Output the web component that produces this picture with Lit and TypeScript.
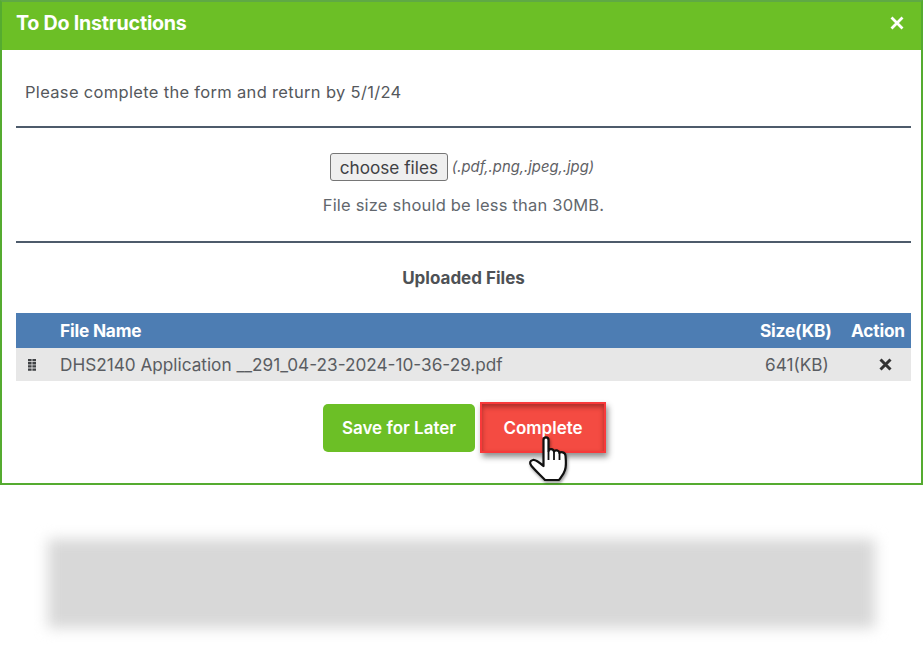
import { LitElement, html, css } from "lit";
import { customElement } from "lit/decorators.js";

@customElement("app-root")
export class AppRoot extends LitElement {
  static styles = css`
    :host { display: block; width: 923px; height: 654px; background: #fff; font-family: Inter, "Open Sans", sans-serif; color: #56595e; overflow: hidden; }
    .modal { height: 485px; box-sizing: border-box; border: 2px solid #55ab30; border-top-color: #5fa945; display: flex; flex-direction: column; background: #fff; }
    .head { height: 48px; flex: none; background: #6cbf26; display: flex; align-items: center; justify-content: space-between; padding: 0 17px 7px 14px; color: #fff; font-weight: 700; font-size: 19.7px; letter-spacing: -0.25px; box-sizing: border-box; }
    .head svg { display: block; }
    .body { flex: 1; padding: 0 10px 0 14px; display: flex; flex-direction: column; }
    .msg { height: 76px; box-sizing: border-box; padding: 32px 0 0 9px; font-size: 16.5px; line-height: 20px; letter-spacing: .32px; color: #55585c; }
    .rule { height: 1.5px; background: #4d5b6b; flex: none; }
    .upload { height: 113.5px; display: flex; flex-direction: column; align-items: center; box-sizing: border-box; padding-top: 25px; }
    .chooser { display: flex; align-items: center; gap: 4px; height: 28px; padding-right: 3px; }
    .btn-file { width: 118px; height: 28px; box-sizing: border-box; border: 1px solid #767676; border-radius: 3px; background: #efefef; font: 17.2px/1 Inter, sans-serif; color: #3f4144; padding: 2px 0 0; }
    .types { font-size: 14.8px; font-style: italic; color: #5f6266; }
    .limit { margin-top: 14px; font-size: 16.5px; line-height: 20px; letter-spacing: .2px; color: #62676d; }
    .title { height: 70px; display: flex; align-items: center; justify-content: center; font-weight: 700; font-size: 17px; color: #4e5155; }
    table { border-collapse: collapse; width: 100%; table-layout: fixed; }
    th { background: #4d7db3; color: #fff; height: 35px; padding: 0; font-size: 17.3px; font-weight: 700; text-align: left; letter-spacing: -0.2px; }
    td { background: #e7e7e7; height: 33px; padding: 1px 0 0; box-sizing: border-box; font-size: 17.2px; color: #5a5d62; }
    .c0 { width: 44px; } .c2 { width: 91px; } .c3 { width: 60px; }
    .size { padding-left: 5px; }
    .grip { display: block; margin-left: 12px; }
    .x { display: block; margin: 0 auto; position: relative; left: 4px; }
    .actions { display: flex; justify-content: center; gap: 5px; margin-top: 21px; padding-left: 2px; }
    .btn { height: 48px; border: 0; border-radius: 5px; color: #fff; font: 600 17px Inter, sans-serif; box-sizing: border-box; padding: 1px 0 0; }
    .save { width: 152px; background: #6cbf26; margin-top: 2px; }
    .done { position: relative; width: 126px; height: 51px; background: #f44b42; border: 2px solid #f8393a; border-radius: 0; box-shadow: 2px 4px 6px rgba(0,0,0,.45), inset 0 3px 5px rgba(110,20,20,.55); padding-top: 2px; }
    .hand { position: absolute; left: 38px; top: 26px; }
    .blur-wrap { padding: 54px 48px 0 48px; }
    .blur { height: 89px; background: #d8d8d8; filter: blur(7px); }
  `;

  render() {
    return html`
      <div class="modal">
        <div class="head">
          <span>To Do Instructions</span>
          <svg width="14" height="14" viewBox="0 0 14 14"><path d="M1.500 1.500l11 11M12.500 1.500l-11 11" stroke="#fff" stroke-width="2.800"/></svg>
        </div>
        <div class="body">
          <div class="msg">Please complete the form and return by 5/1/24</div>
          <div class="rule"></div>
          <div class="upload">
            <div class="chooser">
              <button class="btn-file">choose files</button>
              <span class="types">(.pdf,.png,.jpeg,.jpg)</span>
            </div>
            <div class="limit">File size should be less than 30MB.</div>
          </div>
          <div class="rule"></div>
          <div class="title">Uploaded Files</div>
          <table>
            <thead>
              <tr>
                <th class="c0"></th>
                <th>File Name</th>
                <th class="c2">Size(KB)</th>
                <th class="c3">Action</th>
              </tr>
            </thead>
            <tbody>
              <tr>
                <td>
                  <svg class="grip" width="8" height="12" viewBox="0 0 8 12"><path d="M0 0h3.600v2.300H0zM4.400 0h3.600v2.300H4.400zM0 3.100h3.600v2.300H0zM4.400 3.100h3.600v2.300H4.400zM0 6.300h3.600v2.300H0zM4.400 6.300h3.600v2.300H4.400zM0 9.500h3.600v2.300H0zM4.400 9.500h3.600v2.300H4.400z" fill="#3f4144"/></svg>
                </td>
                <td>DHS2140 Application __291_04-23-2024-10-36-29.pdf</td>
                <td class="size">641(KB)</td>
                <td><svg class="x" width="13" height="13" viewBox="0 0 13 13"><path d="M1.500 1.500l10 10M11.500 1.500l-10 10" stroke="#333" stroke-width="3"/></svg></td>
              </tr>
            </tbody>
          </table>
          <div class="actions">
            <button class="btn save">Save for Later</button>
            <button class="btn done">Complete
              <svg class="hand" width="60" height="60" viewBox="0 0 60 60">
                <path d="M23.500 10C23.500 6.500 28.500 6.500 28.500 10L28.500 21C29 18.500 33.500 18.500 34 21.500C35 19.500 39 20 39.500 23C40.500 21.500 45 22 45.500 25.500C46 31 46.500 36 45 40C44 44 41 47 39 50L25 50C22 46.500 17 42.500 11.500 36C9 33 10 30.500 13 30C16 29.500 20 33 23.500 36Z" fill="#fff" stroke="#111" stroke-width="2.200" stroke-linejoin="round" filter="drop-shadow(1px 2px 1.500px rgba(0,0,0,.4))"/>
                <path d="M28.500 21V30M34 21.500V30M39.500 23V30" stroke="#111" stroke-width="1.800" fill="none"/>
              </svg>
            </button>
          </div>
        </div>
      </div>
      <div class="blur-wrap"><div class="blur"></div></div>
    `;
  }
}
